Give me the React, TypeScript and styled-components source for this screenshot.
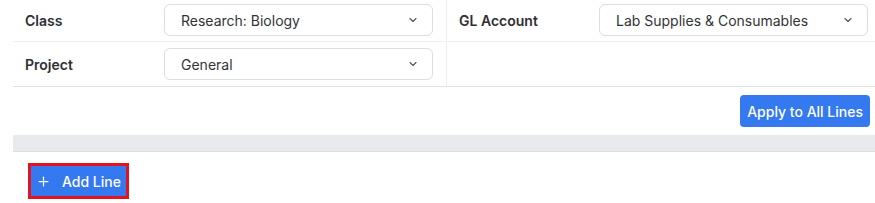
import styled, { createGlobalStyle } from 'styled-components'
import { ChevronDown, Plus } from 'lucide-react'

const GlobalStyle = createGlobalStyle`
    body {
        margin: 0;
        background: #fff;
        font-family: Inter, "Noto Sans", sans-serif;
        color: #2b2b2f;
    }
`;

const Page = styled.div`
    width: 875px;
    padding-left: 13px;
    box-sizing: border-box;
`;

const FieldGrid = styled.div`
    display: grid;
    grid-template-columns: 433px 1fr;
    border-bottom: 1px solid #e1e2e7;
`;

const Cell = styled.div<{ $second?: boolean; $top?: boolean }>`
    display: grid;
    grid-template-columns: ${p => (p.$second ? '140px' : '139px')} 269px;
    align-items: center;
    padding: ${p => (p.$top ? '4px 12px 5px' : '6px 12px')};
    border-left: ${p => (p.$second ? '1px solid #efeff2' : 'none')};
    border-bottom: ${p => (p.$top ? '1px solid #f0f0f3' : 'none')};
    min-height: 32px;
`;

const Label = styled.div`
    font-size: 14px;
    font-weight: 600;
    color: #2e2e33;
`;

const Select = styled.div`
    height: 32px;
    box-sizing: border-box;
    border: 1px solid #dcdde2;
    border-radius: 6px;
    display: flex;
    align-items: center;
    justify-content: space-between;
    padding: 0 13px 0 16px;
    font-size: 14px;
    color: #333338;
    background: #fff;
    svg {
        color: #555;
    }
`;

const ApplyRow = styled.div`
    display: flex;
    justify-content: flex-end;
    padding: 8px 5px 8px 0;
`;

const PrimaryButton = styled.button`
    background: #3579f0;
    color: #fff;
    border: none;
    border-radius: 4px;
    height: 32px;
    padding: 0 7px;
    font-family: Inter, "Noto Sans", sans-serif;
    font-size: 14px;
    font-weight: 500;
    cursor: pointer;
`;

const Band = styled.div`
    height: 16px;
    background: #e9eaee;
    border-bottom: 1px solid #dcdde2;
`;

const Footer = styled.div`
    padding: 11px 0 0 15px;
`;

const AddButton = styled.button`
    display: flex;
    align-items: center;
    gap: 11px;
    background: #3579f0;
    color: #fff;
    border: 3px solid #e5131d;
    height: 36px;
    width: 101px;
    box-sizing: border-box;
    padding: 0 0 0 5px;
    font-family: Inter, "Noto Sans", sans-serif;
    font-size: 14px;
    font-weight: 500;
    cursor: pointer;
`;

export default function App() {
    return (
        <Page>
            <GlobalStyle />
            <FieldGrid>
                <Cell $top>
                    <Label>Class</Label>
                    <Select>
                        Research: Biology
                        <ChevronDown size={12} strokeWidth={2.2} />
                    </Select>
                </Cell>
                <Cell $top $second>
                    <Label>GL Account</Label>
                    <Select>
                        Lab Supplies &amp; Consumables
                        <ChevronDown size={12} strokeWidth={2.2} />
                    </Select>
                </Cell>
                <Cell>
                    <Label>Project</Label>
                    <Select>
                        General
                        <ChevronDown size={12} strokeWidth={2.2} />
                    </Select>
                </Cell>
                <Cell $second />
            </FieldGrid>

            <ApplyRow>
                <PrimaryButton>Apply to All Lines</PrimaryButton>
            </ApplyRow>

            <Band />

            <Footer>
                <AddButton>
                    <Plus size={15} strokeWidth={2} />
                    Add Line
                </AddButton>
            </Footer>
        </Page>
    )
}
